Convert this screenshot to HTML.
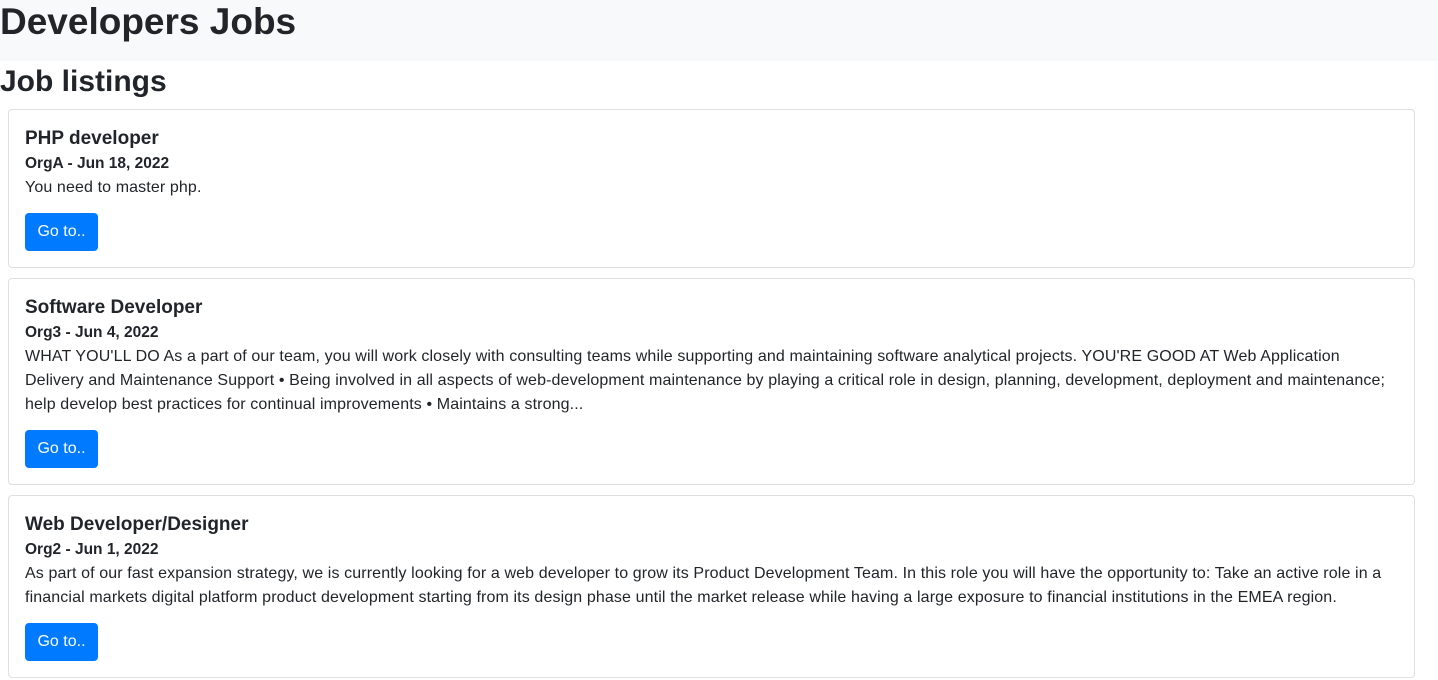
<!DOCTYPE html>
<html><head><meta charset="utf-8">
<style>
*{box-sizing:border-box}
body{margin:0;font-family:"Liberation Sans",sans-serif;color:#212529;background:#fff;width:1438px;height:680px;overflow:hidden}
.hdr{background:#f8f9fa;height:61px}
h1{margin:0;font-size:37px;font-weight:bold;line-height:44px;padding-top:0}
h2{margin:0;font-size:30px;font-weight:bold;line-height:40px;padding-top:0}
.card{margin:0 23px 10px 8px;border:1px solid #dfdfdf;border-radius:4px;padding:16px}
.t{font-size:19px;font-weight:bold;line-height:24px;position:relative;top:1px}
.s{font-weight:bold;line-height:24px;font-size:15.5px;position:relative;top:2px}
.p{font-size:16px;line-height:24px;white-space:nowrap;letter-spacing:0.12px;position:relative;top:2px}
.b{display:inline-block;margin-top:15px;background:#007bff;color:#fff;border-radius:4px;height:38px;width:73px;line-height:38px;text-align:center;font-size:16px}
</style></head><body>
<div class="hdr"><h1>Developers Jobs</h1></div>
<h2 style="margin-top:1px;margin-bottom:7px">Job listings</h2>
<div class="card">
<div class="t">PHP developer</div>
<div class="s">OrgA - Jun 18, 2022</div>
<div class="p">You need to master php.</div>
<div class="b">Go to..</div>
</div>
<div class="card">
<div class="t">Software Developer</div>
<div class="s">Org3 - Jun 4, 2022</div>
<div class="p">WHAT YOU'LL DO As a part of our team, you will work closely with consulting teams while supporting and maintaining software analytical projects. YOU'RE GOOD AT Web Application<br>Delivery and Maintenance Support • Being involved in all aspects of web-development maintenance by playing a critical role in design, planning, development, deployment and maintenance;<br>help develop best practices for continual improvements • Maintains a strong...</div>
<div class="b">Go to..</div>
</div>
<div class="card">
<div class="t">Web Developer/Designer</div>
<div class="s">Org2 - Jun 1, 2022</div>
<div class="p">As part of our fast expansion strategy, we is currently looking for a web developer to grow its Product Development Team. In this role you will have the opportunity to: Take an active role in a<br>financial markets digital platform product development starting from its design phase until the market release while having a large exposure to financial institutions in the EMEA region.</div>
<div class="b">Go to..</div>
</div>
</body></html>
